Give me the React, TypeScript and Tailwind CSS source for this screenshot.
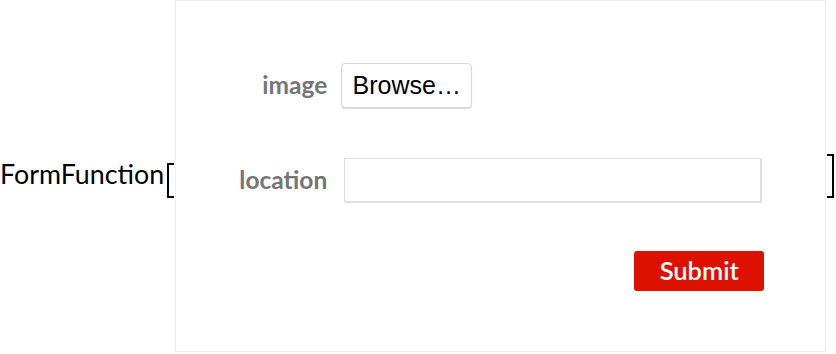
export default function App() {
  return (
    <div className="flex h-[354px] w-[836px] items-start bg-white font-['Lato',sans-serif]">
      <div className="flex h-[354px] items-center">
        <span className="mt-[-5px] text-[26.8px] leading-none text-black">FormFunction</span>
        <span className="mt-[6px] ml-[3px] h-[35px] w-[7px] border-y-2 border-l-2 border-black" />
      </div>
      <div className="ml-[1px] h-[352px] w-[651px] border border-[#eeeeee] bg-white">
        <div className="grid grid-cols-[151px_1fr] items-center gap-x-[14px] pt-[62px]">
          <label className="text-right text-[24.5px] font-bold text-[#757575]">image</label>
          <div>
            <button className="h-[45px] w-[131px] rounded-[4px] border border-[#d8d8d8] bg-white font-['Liberation_Sans',sans-serif] text-[25px] text-black shadow-[0_1px_1px_rgba(0,0,0,0.15)]">
              Browse…
            </button>
          </div>
          <label className="mt-[50px] text-right text-[24.5px] font-bold text-[#757575]">location</label>
          <div className="mt-[50px] pl-[3px]">
            <input className="block h-[44px] w-[417px] border border-[#dddddd] bg-white shadow-[1px_1px_1px_rgba(0,0,0,0.12)] outline-none" />
          </div>
        </div>
        <div className="mt-[49px] flex pl-[458px]">
          <button className="h-[40px] w-[130px] rounded-[3px] bg-[#dd1100] text-[25.5px] font-semibold leading-none text-white">
            Submit
          </button>
        </div>
      </div>
      <div className="flex h-[354px] items-center">
        <span className="mt-[-2px] ml-[1px] h-[44px] w-[7px] border-y-2 border-r-2 border-black" />
      </div>
    </div>
  );
}
